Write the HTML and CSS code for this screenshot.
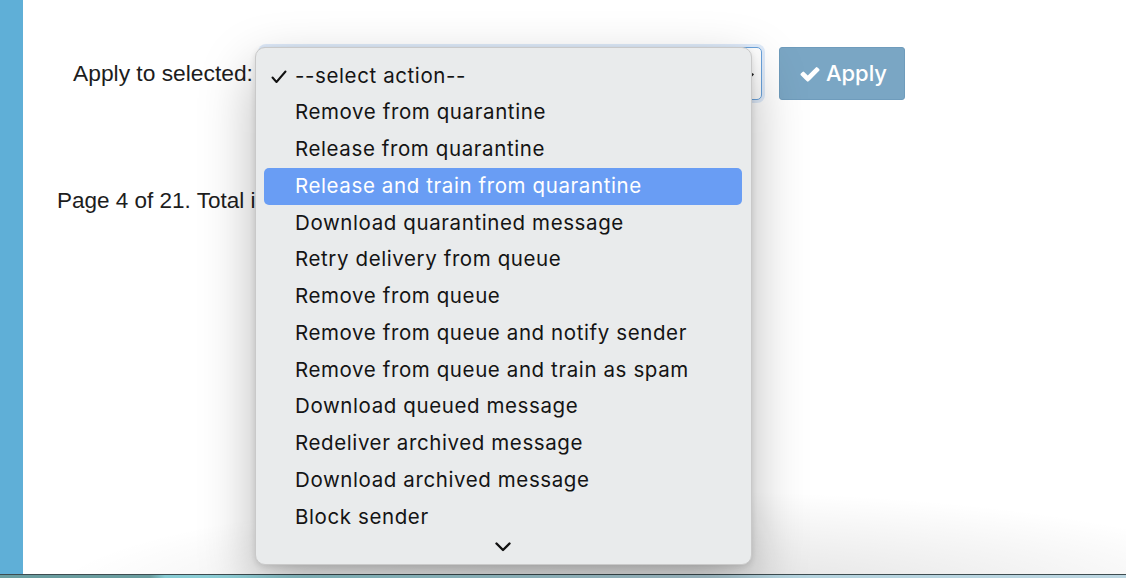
FILE: index.html
```html
<!DOCTYPE html>
<html lang="en">
<head>
<meta charset="utf-8">
<title>Apply to selected</title>
<link rel="stylesheet" href="styles.css">
</head>
<body>
<div class="window">
  <div class="sidebar"></div>
  <div class="main">
    <div class="toolbar">
      <label class="label">Apply to selected:</label>
      <div class="select">
        <span class="select-arrow"></span>
      </div>
      <button class="apply-btn">
        <svg class="apply-icon" viewBox="0 0 1792 1792" width="22" height="22"><path fill="#fff" d="M1671 566q0 40-28 68l-724 724-136 136q-28 28-68 28t-68-28l-136-136-362-362q-28-28-28-68t28-68l136-136q28-28 68-28t68 28l294 295 656-657q28-28 68-28t68 28l136 136q28 28 28 68z"/></svg>
        <span>Apply</span>
      </button>
    </div>
    <p class="paging">Page 4 of 21. Total items: 402.</p>

    <div class="menu">
      <div class="menu-item checked">
        <svg class="tick" viewBox="0 0 16 14" width="16" height="14"><polyline points="1.5,7.5 5.5,12 14.5,1.5" fill="none" stroke="#111" stroke-width="2" stroke-linecap="round" stroke-linejoin="round"/></svg>
        --select action--
      </div>
      <div class="menu-item">Remove from quarantine</div>
      <div class="menu-item">Release from quarantine</div>
      <div class="menu-item active">Release and train from quarantine</div>
      <div class="menu-item">Download quarantined message</div>
      <div class="menu-item">Retry delivery from queue</div>
      <div class="menu-item">Remove from queue</div>
      <div class="menu-item">Remove from queue and notify sender</div>
      <div class="menu-item">Remove from queue and train as spam</div>
      <div class="menu-item">Download queued message</div>
      <div class="menu-item">Redeliver archived message</div>
      <div class="menu-item">Download archived message</div>
      <div class="menu-item">Block sender</div>
      <div class="menu-more">
        <svg viewBox="0 0 16 10" width="16" height="10"><polyline points="1.5,1.5 8,8 14.5,1.5" fill="none" stroke="#111" stroke-width="2.4" stroke-linecap="round" stroke-linejoin="round"/></svg>
      </div>
    </div>
  </div>
</div>
<div class="desktop"></div>
</body>
</html>
```

FILE: styles.css
```css
* { box-sizing: border-box; }

html, body {
  margin: 0;
  padding: 0;
  width: 1126px;
  height: 578px;
  overflow: hidden;
}

body {
  display: flex;
  flex-direction: column;
  font-family: "Liberation Sans", Arial, sans-serif;
  color: #1b1b1b;
}

.window {
  display: flex;
  height: 574px;
}

.sidebar {
  width: 23px;
  flex: none;
  background: #5fafd7;
}

.main {
  position: relative;
  flex: 1;
  padding: 47px 0 0 34px;
  background:
    radial-gradient(ellipse 620px 110px at 640px 600px, rgba(0,0,0,0.13), rgba(0,0,0,0) 100%),
    #ffffff;
}

.toolbar {
  display: flex;
  align-items: center;
  padding-left: 16px;
  height: 53px;
}

.label {
  font-size: 22.8px;
  color: #1d1d1d;
}

.select {
  position: relative;
  margin-left: 8px;
  width: 501px;
  height: 53px;
  border: 1px solid #6aa3dc;
  border-radius: 5px;
  background: #fff;
  box-shadow: 0 0 0 3px rgba(110, 165, 230, 0.22);
}

.select-arrow {
  position: absolute;
  right: 8px;
  top: 24px;
  width: 5px;
  height: 5px;
  border-right: 2px solid #222;
  border-bottom: 2px solid #222;
  transform: rotate(45deg);
}

.apply-btn {
  display: flex;
  align-items: center;
  justify-content: center;
  gap: 5px;
  margin-left: 17px;
  width: 126px;
  height: 53px;
  background: #7aa6c4;
  border: 1px solid #6f9cbc;
  border-radius: 3px;
  color: #ffffff;
  font-family: Inter, "Open Sans", sans-serif;
  font-size: 22px;
  font-weight: 500;
  padding: 0 0 2px 2px;
}

.apply-icon { margin-top: 2px; }

.paging {
  margin: 88px 0 0 0;
  font-size: 22.5px;
  line-height: 26px;
  color: #1d1d1d;
}

.menu {
  position: absolute;
  left: 232px;
  top: 47px;
  width: 497px;
  height: 518px;
  padding: 9.5px 9px 0 8px;
  background: #e9ebec;
  border: 1px solid #c9c9c9;
  border-radius: 10px;
  box-shadow: 0 22px 55px rgba(0,0,0,0.28), 0 2px 6px rgba(0,0,0,0.12);
  overflow: hidden;
  font-family: Inter, "Noto Sans", sans-serif;
  font-size: 20.5px;
  letter-spacing: 0.6px;
  color: #141414;
}

.menu-item {
  position: relative;
  height: 36.75px;
  line-height: 36.75px;
  padding-left: 31px;
  border-radius: 5px;
  white-space: nowrap;
}

.menu-item.active {
  background: #699df4;
  color: #ffffff;
}

.tick {
  position: absolute;
  left: 7px;
  top: 12px;
}

.menu-more {
  display: flex;
  justify-content: center;
  padding-top: 7px;
}

.desktop {
  height: 4px;
  border-top: 1px solid #3e4c50;
  background: linear-gradient(to right, #6a9d9f 0, #6a9d9f 150px, #87ccd4 165px, #9fd4dc 400px, #b2d2dd 700px, #bcd6e1 100%);
}
```
